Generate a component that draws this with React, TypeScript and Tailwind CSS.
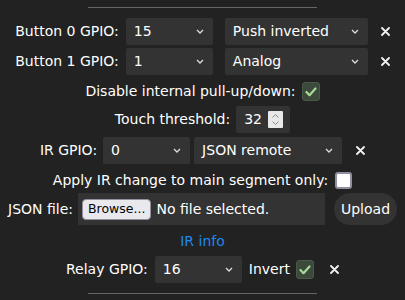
import React from "react";

function Chevron() {
  return (
    <svg width="8" height="5" viewBox="0 0 8 5" className="shrink-0">
      <polyline points="1,1 4,4 7,1" fill="none" stroke="#ddd" strokeWidth="1.3" />
    </svg>
  );
}

function Select({ value, w }: { value: string; w: string }) {
  return (
    <div className={`${w} h-[27px] bg-[#333] flex items-center justify-between pl-[8px] pr-[9px] rounded-[2px]`}>
      <span>{value}</span>
      <Chevron />
    </div>
  );
}

function Cross() {
  return (
    <svg width="9" height="9" viewBox="0 0 9 9" className="shrink-0">
      <path d="M1 1 L8 8 M8 1 L1 8" stroke="#f2f2f2" strokeWidth="1.8" strokeLinecap="round" />
    </svg>
  );
}

function Checked() {
  return (
    <div className="w-[18px] h-[19px] rounded-[3px] bg-[#3b4a3a] border border-[#4a5a48] flex items-center justify-center shrink-0">
      <svg width="12" height="10" viewBox="0 0 12 10">
        <polyline points="1.5,5 4.5,8.2 10.5,1.5" fill="none" stroke="#a8d99a" strokeWidth="2.2" strokeLinecap="round" strokeLinejoin="round" />
      </svg>
    </div>
  );
}

export default function App() {
  return (
    <div className="min-h-[300px] w-[405px] bg-[#222] text-white font-['DejaVu_Sans',sans-serif] text-[14px] flex flex-col items-center pt-[7px]">
      <div className="w-[229px] h-px bg-[#666]" />

      <div className="mt-[8px] h-[30px] flex items-center">
        <span>Button 0 GPIO:</span>
        <div className="ml-[7px]"><Select value="15" w="w-[87px]" /></div>
        <div className="ml-[12px]"><Select value="Push inverted" w="w-[143px]" /></div>
        <div className="ml-[13px]"><Cross /></div>
      </div>

      <div className="h-[31px] flex items-center">
        <span>Button 1 GPIO:</span>
        <div className="ml-[7px]"><Select value="1" w="w-[87px]" /></div>
        <div className="ml-[12px]"><Select value="Analog" w="w-[143px]" /></div>
        <div className="ml-[13px]"><Cross /></div>
      </div>

      <div className="h-[29px] flex items-center">
        <span>Disable internal pull-up/down:</span>
        <div className="ml-[6px]"><Checked /></div>
      </div>

      <div className="h-[27px] flex items-center">
        <span>Touch threshold:</span>
        <div className="ml-[6px] w-[54px] h-[27px] bg-[#333] flex items-center pl-[8px] rounded-[2px]">
          <span>32</span>
          <div className="ml-[6px] w-[15px] h-[17px] bg-[#e9e9e9] rounded-[1px] flex flex-col items-center justify-center gap-[3px]">
            <svg width="7" height="4" viewBox="0 0 7 4"><polyline points="0.5,3.5 3.5,0.5 6.5,3.5" fill="none" stroke="#888" strokeWidth="1" /></svg>
            <svg width="7" height="4" viewBox="0 0 7 4"><polyline points="0.5,0.5 3.5,3.5 6.5,0.5" fill="none" stroke="#888" strokeWidth="1" /></svg>
          </div>
        </div>
      </div>

      <div className="h-[35px] flex items-center">
        <span>IR GPIO:</span>
        <div className="ml-[6px]"><Select value="0" w="w-[87px]" /></div>
        <div className="ml-[4px]"><Select value="JSON remote" w="w-[148px]" /></div>
        <div className="ml-[14px]"><Cross /></div>
      </div>

      <div className="h-[25px] flex items-center">
        <span>Apply IR change to main segment only:</span>
        <div className="ml-[7px] w-[17px] h-[17px] rounded-[3px] bg-white border-2 border-[#8f8f9d] shrink-0" />
      </div>

      <div className="h-[32px] flex items-center">
        <span>JSON file:</span>
        <div className="ml-[5px] w-[247px] h-[32px] bg-[#333] flex items-center pl-[4px]">
          <div className="h-[21px] px-[5px] bg-[#e9e9ed] border border-[#8f8f9d] rounded-[4px] text-black text-[12.5px] flex items-center">Browse...</div>
          <span className="ml-[5px]">No file selected.</span>
        </div>
        <div className="ml-[9px] w-[63px] h-[32px] rounded-full bg-[#333] flex items-center justify-center">Upload</div>
      </div>

      <div className="h-[32px] flex items-center">
        <span className="text-[#1e88f0]">IR info</span>
      </div>

      <div className="h-[25px] flex items-center">
        <span>Relay GPIO:</span>
        <div className="ml-[7px]"><Select value="16" w="w-[87px]" /></div>
        <span className="ml-[7px]">Invert</span>
        <div className="ml-[6px]"><Checked /></div>
        <div className="ml-[16px]"><Cross /></div>
      </div>

      <div className="mt-[11px] w-[229px] h-px bg-[#666]" />
    </div>
  );
}
